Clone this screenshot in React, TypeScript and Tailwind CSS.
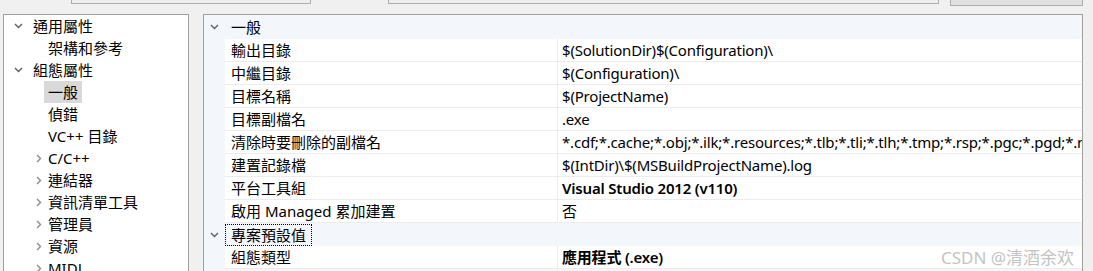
import React from "react";

const FONT = { fontFamily: '"Noto Sans", "Noto Sans CJK TC", sans-serif' };

function ChevDown() {
  return (
    <svg width="9" height="6" viewBox="0 0 9 6" className="shrink-0">
      <polyline points="1,1 4.5,4.5 8,1" fill="none" stroke="#5f5f5f" strokeWidth="1.4" />
    </svg>
  );
}

function ChevRight() {
  return (
    <svg width="6" height="9" viewBox="0 0 6 9" className="shrink-0">
      <polyline points="1,1 4.5,4.5 1,8" fill="none" stroke="#8a8a8a" strokeWidth="1.4" />
    </svg>
  );
}

type TreeItem = { label: string; level: 0 | 1; kind: "open" | "closed" | "leaf"; selected?: boolean };

const tree: TreeItem[] = [
  { label: "通用屬性", level: 0, kind: "open" },
  { label: "架構和參考", level: 1, kind: "leaf" },
  { label: "組態屬性", level: 0, kind: "open" },
  { label: "一般", level: 1, kind: "leaf", selected: true },
  { label: "偵錯", level: 1, kind: "leaf" },
  { label: "VC++ 目錄", level: 1, kind: "leaf" },
  { label: "C/C++", level: 1, kind: "closed" },
  { label: "連結器", level: 1, kind: "closed" },
  { label: "資訊清單工具", level: 1, kind: "closed" },
  { label: "管理員", level: 1, kind: "closed" },
  { label: "資源", level: 1, kind: "closed" },
  { label: "MIDL", level: 1, kind: "closed" },
];

function Tree() {
  return (
    <div className="w-[186px] h-[260px] bg-white border border-[#a0a0a0] border-b-0 overflow-hidden">
      {tree.map((t, i) => (
        <div key={i} className="h-[22px] flex items-center relative">
          {t.level === 0 ? (
            <>
              <div className="w-[29px] pl-[10px] flex items-center">
                <ChevDown />
              </div>
              <span className="text-[15px] leading-[22px] text-black">{t.label}</span>
            </>
          ) : (
            <>
              <div className="w-[40px] pl-[32px] flex items-center">{t.kind === "closed" ? <ChevRight /> : null}</div>
              <span
                className={
                  "text-[15px] leading-[22px] text-black px-[4px] " + (t.selected ? "bg-[#d9d9d9]" : "")
                }
              >
                {t.label}
              </span>
            </>
          )}
        </div>
      ))}
    </div>
  );
}

type Row =
  | { type: "cat"; label: string; focus?: boolean; h: number }
  | { type: "prop"; name: string; value: string; bold?: boolean };

const rows: Row[] = [
  { type: "cat", label: "一般", h: 24 },
  { type: "prop", name: "輸出目錄", value: "$(SolutionDir)$(Configuration)\\" },
  { type: "prop", name: "中繼目錄", value: "$(Configuration)\\" },
  { type: "prop", name: "目標名稱", value: "$(ProjectName)" },
  { type: "prop", name: "目標副檔名", value: ".exe" },
  {
    type: "prop",
    name: "清除時要刪除的副檔名",
    value: "*.cdf;*.cache;*.obj;*.ilk;*.resources;*.tlb;*.tli;*.tlh;*.tmp;*.rsp;*.pgc;*.pgd;*.meta;*.tlog;*.manifest;*.res;*.pch;*.exp;*.idb;*.rep;*.xdc;*.pdb",
  },
  { type: "prop", name: "建置記錄檔", value: "$(IntDir)\\$(MSBuildProjectName).log" },
  { type: "prop", name: "平台工具組", value: "Visual Studio 2012 (v110)", bold: true },
  { type: "prop", name: "啟用 Managed 累加建置", value: "否" },
  { type: "cat", label: "專案預設值", focus: true, h: 23 },
  { type: "prop", name: "組態類型", value: "應用程式 (.exe)", bold: true },
];

function Grid() {
  return (
    <div className="w-[880px] h-[260px] border border-[#a0a0a0] border-b-0 bg-[#f3f6fb] overflow-hidden">
      {rows.map((r, i) =>
        r.type === "cat" ? (
          <div key={i} className="flex items-center bg-[#f3f6fb]" style={{ height: r.h }}>
            <div className="w-[21px] pl-[6px] flex items-center">
              <ChevDown />
            </div>
            <span
              className={
                "text-[15px] leading-[20px] text-black px-[5px] " +
                (r.focus ? "border border-dotted border-black" : "border border-transparent")
              }
            >
              {r.label}
            </span>
          </div>
        ) : (
          <div key={i} className="h-[23px] flex">
            <div className="w-[21px] shrink-0 bg-[#f3f6fb]" />
            <div className="flex-1 flex bg-white border-b border-[#ececec]">
              <div className="w-[333px] shrink-0 pl-[6px] border-r border-[#ececec] text-[15px] leading-[22px] text-black whitespace-nowrap">
                {r.name}
              </div>
              <div
                className={
                  "flex-1 min-w-0 overflow-hidden pl-[4px] text-[15px] leading-[22px] text-black whitespace-nowrap tracking-[-0.2px] " +
                  (r.bold ? "font-semibold" : "")
                }
              >
                {r.value}
              </div>
            </div>
          </div>
        )
      )}
    </div>
  );
}

export default function App() {
  return (
    <div className="w-[1093px] h-[271px] bg-[#f0f0f0] overflow-hidden relative" style={FONT}>
      <div className="h-[14px] flex items-start">
        <div className="ml-[71px] w-[240px] h-[4px] border-x border-b border-[#adadad] bg-[#eeeeee]" />
        <div className="ml-[77px] w-[551px] h-[4px] border-x border-b border-[#adadad] bg-[#eeeeee]" />
        <div className="ml-[11px] w-[133px] h-[6px] border-x border-b border-[#adadad] bg-[#e1e1e1]" />
      </div>
      <div className="flex pl-[3px] gap-[14px]">
        <Tree />
        <Grid />
      </div>
      <div
        className="absolute left-[941px] top-[247px] text-[17px] leading-[22px] text-[#c4c4c4] whitespace-nowrap"
        style={{ fontFamily: '"Noto Sans", "Noto Sans CJK SC", sans-serif' }}
      >
        CSDN @清酒余欢
      </div>
    </div>
  );
}
